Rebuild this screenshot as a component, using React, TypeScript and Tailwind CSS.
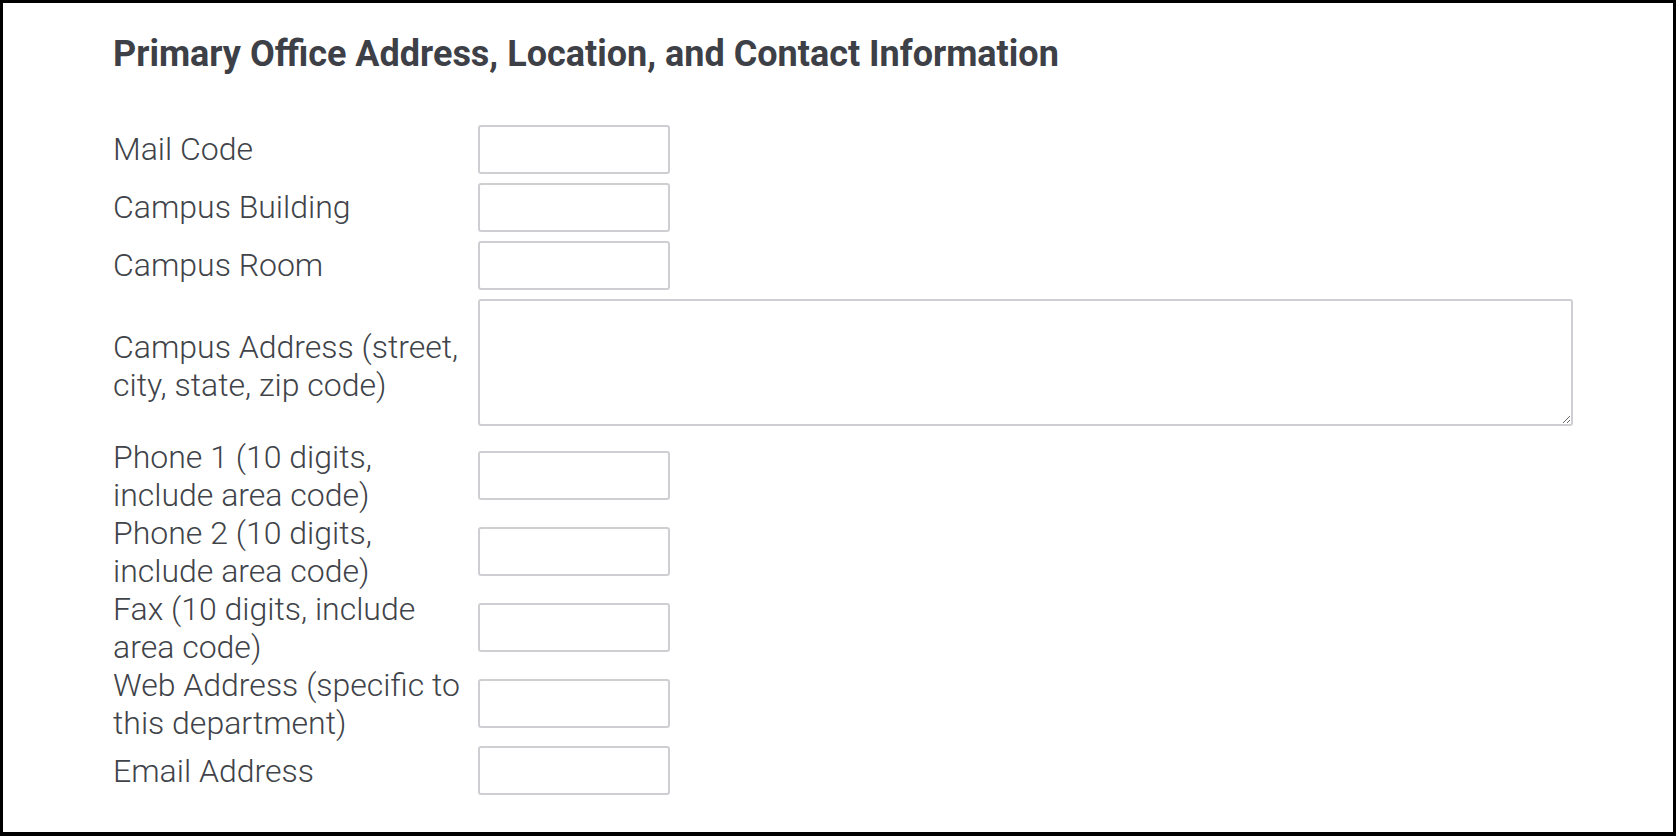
import React from "react";

const rows: { label: string; kind: "input" | "textarea" }[] = [
  { label: "Mail Code", kind: "input" },
  { label: "Campus Building", kind: "input" },
  { label: "Campus Room", kind: "input" },
  { label: "Campus Address (street, city, state, zip code)", kind: "textarea" },
  { label: "Phone 1 (10 digits, include area code)", kind: "input" },
  { label: "Phone 2 (10 digits, include area code)", kind: "input" },
  { label: "Fax (10 digits, include area code)", kind: "input" },
  { label: "Web Address (specific to this department)", kind: "input" },
  { label: "Email Address", kind: "input" },
];

export default function App() {
  return (
    <div
      className="w-[1676px] h-[836px] box-border border-[3px] border-b-[4px] border-black bg-white overflow-hidden"
      style={{ fontFamily: "Roboto, 'Noto Sans', sans-serif" }}
    >
      <div className="pl-[110px] pt-[31px]">
        <h2 className="text-[36px] leading-[40px] font-bold text-[#3d4046] m-0">
          Primary Office Address, Location, and Contact Information
        </h2>
        <div className="mt-[46px] flex flex-col">
          {rows.map((r) => (
            <div key={r.label} className="flex items-center">
              <label className="w-[365px] pr-[6px] text-[32px] leading-[38px] font-light text-[#404349]">
                {r.label}
              </label>
              {r.kind === "input" ? (
                <input
                  type="text"
                  className="w-[192px] h-[49px] my-[4.5px] border-2 border-[#cfcfd3] rounded-[3px] bg-white outline-none"
                />
              ) : (
                <textarea className="block w-[1095px] h-[127px] mt-[4.5px] mb-[12px] border-2 border-[#cfcfd3] rounded-[3px] bg-white outline-none" />
              )}
            </div>
          ))}
        </div>
      </div>
    </div>
  );
}
